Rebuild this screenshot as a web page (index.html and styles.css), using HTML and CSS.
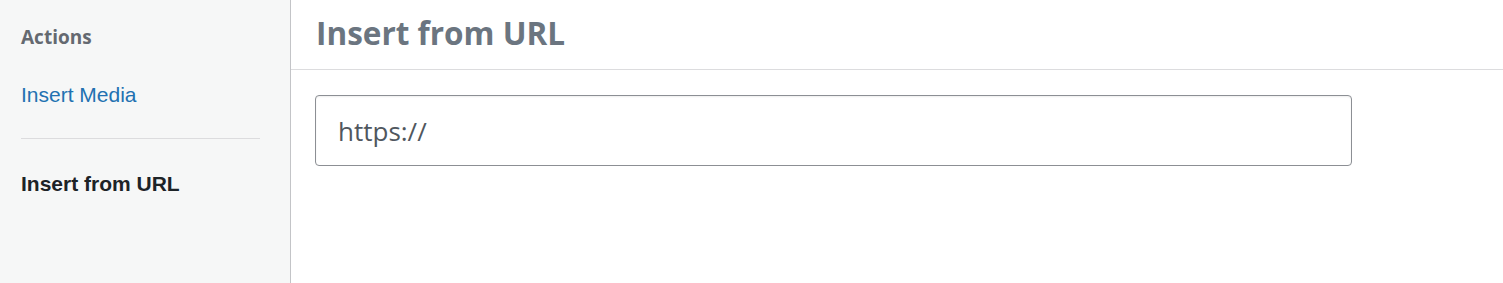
FILE: index.html
```html
<!DOCTYPE html>
<html>
<head>
<meta charset="utf-8">
<link rel="stylesheet" href="styles.css">
</head>
<body>
<div class="modal">
  <aside class="menu">
    <h2 class="menu-title">Actions</h2>
    <a class="menu-item link">Insert Media</a>
    <div class="separator"></div>
    <a class="menu-item active">Insert from URL</a>
  </aside>
  <main class="content">
    <header class="title-bar">
      <h1 class="title">Insert from URL</h1>
    </header>
    <div class="embed">
      <input class="url" type="text" value="https://">
    </div>
  </main>
</div>
</body>
</html>
```
FILE: styles.css
```css
html, body {
  margin: 0;
  padding: 0;
  height: 100%;
  background: #fff;
}
.modal {
  display: flex;
  height: 283px;
}
.menu {
  width: 291px;
  flex: none;
  background: #f6f7f7;
  border-right: 1px solid #c3c4c7;
  padding: 0 30px 0 21px;
  box-sizing: border-box;
}
.menu-title {
  margin: 0;
  padding-top: 24px;
  font-family: "Open Sans", sans-serif;
  font-weight: 700;
  font-size: 19px;
  line-height: 26px;
  color: #646970;
}
.menu-item {
  display: block;
  font-family: "Liberation Sans", Arial, sans-serif;
  font-size: 21px;
  line-height: 26px;
}
.link {
  margin-top: 32px;
  color: #2271b1;
}
.separator {
  height: 1px;
  background: #dcdcde;
  margin: 30px 0 0 0;
  width: 239px;
}
.active {
  margin-top: 32px;
  font-weight: 700;
  color: #1d2327;
}
.content {
  flex: 1;
  display: flex;
  flex-direction: column;
}
.title-bar {
  height: 70px;
  border-bottom: 1px solid #dcdcde;
  box-sizing: border-box;
  padding-left: 25px;
}
.title {
  margin: 0;
  padding-top: 13px;
  font-family: "Open Sans", sans-serif;
  font-weight: 700;
  font-size: 31.5px;
  line-height: 40px;
  color: #6b7580;
}
.embed {
  padding: 25px 0 0 24px;
}
.url {
  display: block;
  width: 1037px;
  height: 71px;
  box-sizing: border-box;
  border: 1px solid #8c8f94;
  border-radius: 4px;
  box-shadow: inset 0 1px 2px rgba(0,0,0,0.07);
  padding: 0 22px;
  font-family: "Open Sans", sans-serif;
  font-size: 26px;
  color: #50575e;
  background: #fff;
  outline: none;
}
```
